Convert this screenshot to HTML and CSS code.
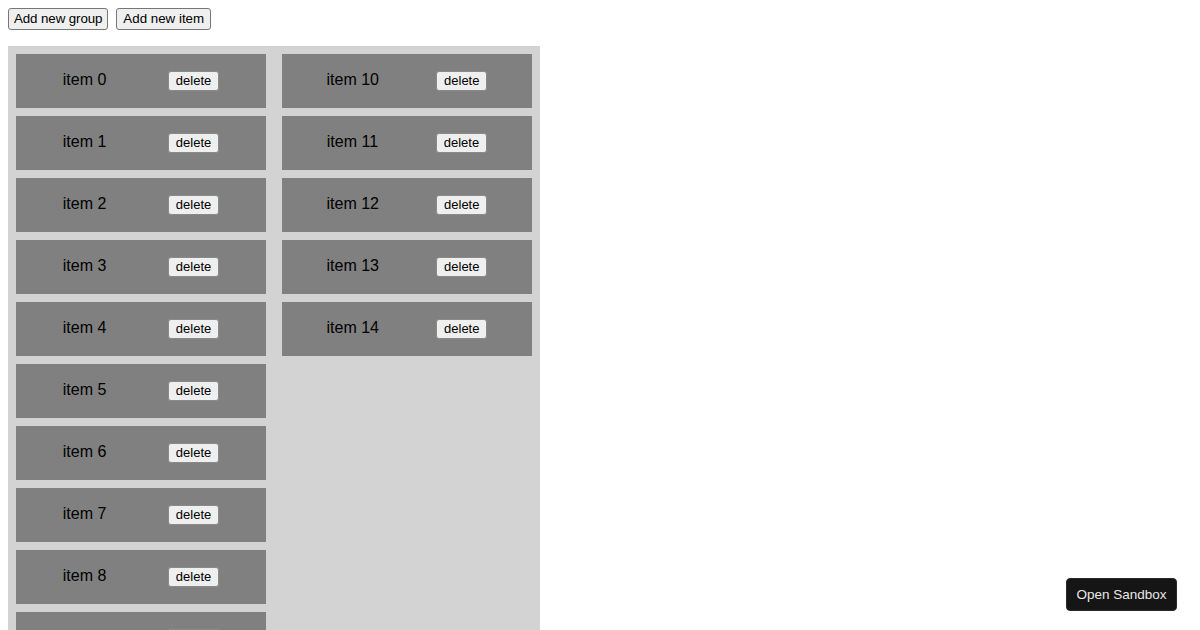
FILE: index.html
```html
<!DOCTYPE html>
<html>
<head>
<meta charset="utf-8">
<link rel="stylesheet" href="styles.css">
</head>
<body>
<div class="toolbar">
  <button class="btn btn-group">Add new group</button>
  <button class="btn">Add new item</button>
</div>
<div class="board">
  <div class="column">
    <div class="item"><span class="label">item 0</span><button class="del">delete</button></div>
    <div class="item"><span class="label">item 1</span><button class="del">delete</button></div>
    <div class="item"><span class="label">item 2</span><button class="del">delete</button></div>
    <div class="item"><span class="label">item 3</span><button class="del">delete</button></div>
    <div class="item"><span class="label">item 4</span><button class="del">delete</button></div>
    <div class="item"><span class="label">item 5</span><button class="del">delete</button></div>
    <div class="item"><span class="label">item 6</span><button class="del">delete</button></div>
    <div class="item"><span class="label">item 7</span><button class="del">delete</button></div>
    <div class="item"><span class="label">item 8</span><button class="del">delete</button></div>
    <div class="item"><span class="label">item 9</span><button class="del">delete</button></div>
  </div>
  <div class="column">
    <div class="item"><span class="label">item 10</span><button class="del">delete</button></div>
    <div class="item"><span class="label">item 11</span><button class="del">delete</button></div>
    <div class="item"><span class="label">item 12</span><button class="del">delete</button></div>
    <div class="item"><span class="label">item 13</span><button class="del">delete</button></div>
    <div class="item"><span class="label">item 14</span><button class="del">delete</button></div>
  </div>
</div>
<button class="sandbox">Open Sandbox</button>
</body>
</html>
```
FILE: styles.css
```css
body {
  margin: 8px;
  font-family: "Liberation Sans", Arial, sans-serif;
  background: #ffffff;
}
.toolbar {
  display: flex;
  gap: 8px;
  height: 22px;
  align-items: flex-start;
}
.btn, .del {
  font-family: "Liberation Sans", Arial, sans-serif;
  font-size: 13.333px;
  color: #000;
  background: #efefef;
  border: 1px solid #767676;
  border-radius: 3px;
  padding: 1px 6px;
  height: 22px;
  line-height: 18px;
}
.btn-group {
  padding: 1px 5px;
  letter-spacing: -0.1px;
}
.del {
  height: 20px;
  line-height: 16px;
  font-size: 13px;
  padding: 1px 7px;
  border-color: #8a8a8a;
}
.board {
  margin-top: 16px;
  background: #d3d3d3;
  width: 532px;
  box-sizing: border-box;
  padding: 8px;
  display: flex;
  gap: 16px;
  align-items: flex-start;
}
.column {
  width: 250px;
  display: flex;
  flex-direction: column;
  gap: 8px;
}
.item {
  height: 54px;
  box-sizing: border-box;
  padding: 0 16px;
  background: #808080;
  display: flex;
  justify-content: space-around;
  align-items: center;
}
.label {
  font-size: 16px;
  color: #000;
  margin-top: -2px;
}
.sandbox {
  position: fixed;
  right: 23px;
  bottom: 19px;
  width: 111px;
  height: 33px;
  background: #151515;
  color: #e8e8e8;
  border: 1px solid #2a2a2a;
  border-radius: 4px;
  font-family: "Liberation Sans", Arial, sans-serif;
  font-size: 13.5px;
  padding: 0;
}
```
